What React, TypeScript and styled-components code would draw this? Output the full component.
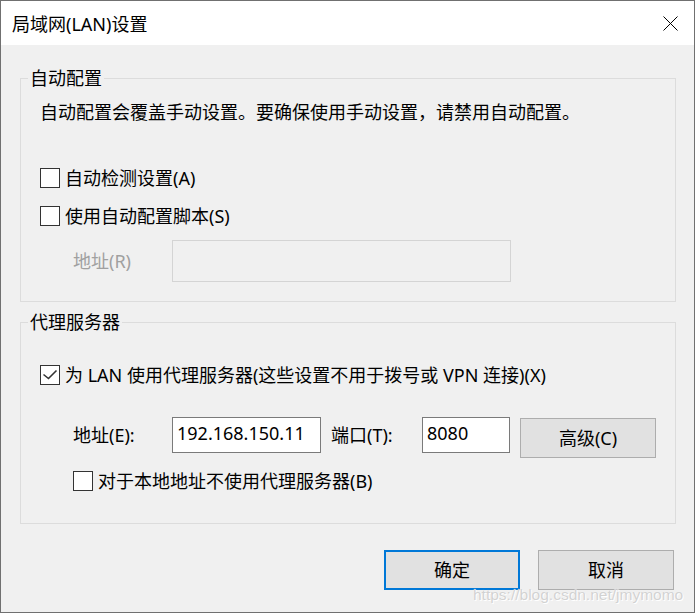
import React from 'react';
import styled, { createGlobalStyle } from 'styled-components';

const GlobalStyle = createGlobalStyle`
  html, body {
    margin: 0;
    padding: 0;
    background: #ffffff;
  }
  body {
    font-family: 'Noto Sans', 'Noto Sans CJK SC', sans-serif;
    font-size: 18px;
    color: #000000;
  }
`;

const Window = styled.div`
  position: relative;
  box-sizing: border-box;
  width: 695px;
  height: 613px;
  border: 1px solid #707070;
  background: #f0f0f0;
  display: flex;
  flex-direction: column;
  overflow: hidden;
`;

const TitleBar = styled.div`
  height: 44px;
  flex: none;
  background: #ffffff;
  display: flex;
  align-items: center;
  justify-content: space-between;
  padding: 0 16px 0 11px;
`;

const Title = styled.span`
  font-size: 18px;
  line-height: 24px;
  margin-top: 1px;
`;

const CloseIcon = styled.svg`
  width: 15px;
  height: 15px;
  display: block;
`;

const Body = styled.div`
  display: flex;
  flex-direction: column;
  padding: 21px 18px 0 19px;
`;

const Group = styled.fieldset<{ $top: number }>`
  margin: ${(p) => p.$top}px 0 0 0;
  padding: 0;
  border: 1px solid #dcdcdc;
  min-width: 0;
`;

const Legend = styled.legend`
  margin-left: 7px;
  padding: 0 2px;
  font-size: 18px;
  line-height: 24px;
`;

const GroupBody = styled.div<{ $bottom: number }>`
  display: flex;
  flex-direction: column;
  padding: 0 0 ${(p) => p.$bottom}px 19px;
`;

const Description = styled.p`
  margin: 10px 0 0 0;
  font-size: 18px;
  line-height: 24px;
`;

const CheckRow = styled.label<{ $top: number; $indent?: boolean }>`
  display: flex;
  align-items: center;
  gap: 5px;
  margin-top: ${(p) => p.$top}px;
  margin-left: ${(p) => (p.$indent ? 33 : 0)}px;
  font-size: 18px;
  line-height: 24px;
  height: 24px;
`;

const Box = styled.span`
  box-sizing: border-box;
  width: 20px;
  height: 20px;
  border: 1px solid #333333;
  background: #ffffff;
  display: flex;
  align-items: center;
  justify-content: center;
  flex: none;
`;

const FieldRow = styled.div<{ $top: number }>`
  display: flex;
  align-items: flex-start;
  margin-top: ${(p) => p.$top}px;
  margin-left: 33px;
`;

const FieldLabel = styled.span<{ $width: number; $height: number; $disabled?: boolean }>`
  width: ${(p) => p.$width}px;
  height: ${(p) => p.$height}px;
  flex: none;
  display: flex;
  align-items: center;
  font-size: 18px;
  line-height: 24px;
  color: ${(p) => (p.$disabled ? '#a0a0a0' : '#000000')};
`;

const TextInput = styled.input<{ $width: number; $height: number }>`
  box-sizing: border-box;
  width: ${(p) => p.$width}px;
  height: ${(p) => p.$height}px;
  flex: none;
  margin: 0 10px 0 0;
  padding: 0 4px 4px 4px;
  border: 1px solid #7a7a7a;
  border-radius: 0;
  background: #ffffff;
  font-family: 'Noto Sans', 'Noto Sans CJK SC', sans-serif;
  font-size: 18px;
  color: #000000;
  outline: none;

  &:disabled {
    border-color: #d4d4d4;
    background: #f0f0f0;
  }
`;

const Button = styled.button<{ $default?: boolean }>`
  box-sizing: border-box;
  width: 136px;
  height: 40px;
  flex: none;
  margin: 0;
  padding: 0;
  background: #e1e1e1;
  border: ${(p) => (p.$default ? '2px solid #0078d7' : '1px solid #adadad')};
  border-radius: 0;
  font-family: 'Noto Sans', 'Noto Sans CJK SC', sans-serif;
  font-size: 18px;
  line-height: 24px;
  color: #000000;
`;

const AdvancedButton = styled(Button)`
  margin-top: 1px;
`;

const Footer = styled.div`
  display: flex;
  justify-content: flex-end;
  gap: 18px;
  margin-top: 26px;
  padding-right: 2px;
`;

const Watermark = styled.span`
  position: absolute;
  left: 472px;
  top: 583px;
  font-family: 'Liberation Sans', Arial, sans-serif;
  font-size: 15.5px;
  line-height: 22px;
  color: #d2d2d2;
  text-shadow: 0 0 1px #ffffff, 1px 1px 0 #ffffff;
  white-space: nowrap;
  pointer-events: none;
`;

const Check = () => (
  <svg width="18" height="18" viewBox="0 0 18 18">
    <polyline
      points="2.5,8.5 7.5,12.5 15.5,4.5"
      fill="none"
      stroke="#333333"
      strokeWidth="1.6"
    />
  </svg>
);

const Checkbox = ({ checked }: { checked?: boolean }) => (
  <Box>{checked && <Check />}</Box>
);

const App = () => {
  return (
    <>
      <GlobalStyle />
      <Window>
        <TitleBar>
          <Title>局域网(LAN)设置</Title>
          <CloseIcon viewBox="0 0 15 15">
            <path d="M0.5 0.5 L14.5 14.5 M14.5 0.5 L0.5 14.5" stroke="#000000" strokeWidth="1" fill="none" />
          </CloseIcon>
        </TitleBar>
        <Body>
          <Group $top={0}>
            <Legend>自动配置</Legend>
            <GroupBody $bottom={19}>
              <Description>
                自动配置会覆盖手动设置。要确保使用手动设置，请禁用自动配置。
              </Description>
              <CheckRow $top={42}>
                <Checkbox />
                自动检测设置(A)
              </CheckRow>
              <CheckRow $top={14}>
                <Checkbox />
                使用自动配置脚本(S)
              </CheckRow>
              <FieldRow $top={12}>
                <FieldLabel $width={99} $height={42} $disabled>
                  地址(R)
                </FieldLabel>
                <TextInput $width={339} $height={42} disabled />
              </FieldRow>
            </GroupBody>
          </Group>

          <Group $top={8}>
            <Legend>代理服务器</Legend>
            <GroupBody $bottom={30}>
              <CheckRow $top={29}>
                <Checkbox checked />
                为 LAN 使用代理服务器(这些设置不用于拨号或 VPN 连接)(X)
              </CheckRow>
              <FieldRow $top={30}>
                <FieldLabel $width={99} $height={36}>
                  地址(E):
                </FieldLabel>
                <TextInput $width={149} $height={36} defaultValue="192.168.150.11" readOnly />
                <FieldLabel $width={91} $height={36}>
                  端口(T):
                </FieldLabel>
                <TextInput $width={88} $height={36} defaultValue="8080" readOnly />
                <AdvancedButton>高级(C)</AdvancedButton>
              </FieldRow>
              <CheckRow $top={11} $indent>
                <Checkbox />
                对于本地地址不使用代理服务器(B)
              </CheckRow>
            </GroupBody>
          </Group>

          <Footer>
            <Button $default>确定</Button>
            <Button>取消</Button>
          </Footer>
        </Body>
        <Watermark>https://blog.csdn.net/jmymomo</Watermark>
      </Window>
    </>
  );
};

export default App;
